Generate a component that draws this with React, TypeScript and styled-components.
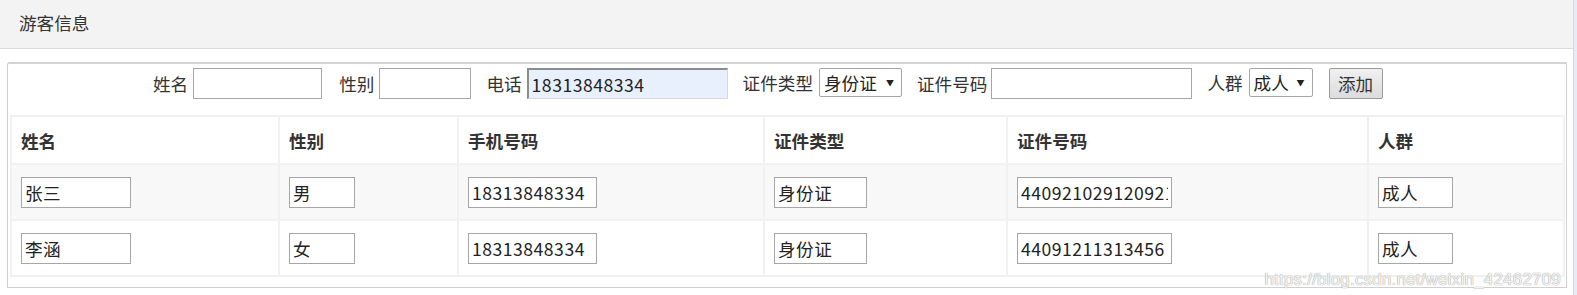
import React from 'react';
import styled, { createGlobalStyle } from 'styled-components';

const GlobalStyle = createGlobalStyle`
  html, body {
    margin: 0;
    padding: 0;
    background: #fff;
    font-family: "Noto Sans CJK SC", "Microsoft YaHei", sans-serif;
    color: #333;
  }
`

const Page = styled.div`
  display: flex;
  width: 100%;
  min-height: 295px;
`

const Main = styled.div`
  flex: 1;
  display: flex;
  flex-direction: column;
`

const ScrollStrip = styled.div`
  width: 5px;
  border-left: 1px solid #d6d9e0;
  background: #e9ecf2;
`

const Header = styled.div`
  height: 49px;
  box-sizing: border-box;
  background: #f3f3f3;
  border-bottom: 1px solid #dcdcdc;
  display: flex;
  align-items: center;
  padding: 0 0 4px 19px;
  font-size: 17.6px;
  color: #333;
`

const Panel = styled.div`
  position: relative;
  margin: 13px 6px 0 7px;
  border: 1px solid #cfcfcf;
  border-top: 2px solid #d4d4d4;
  border-radius: 3px 0 0 0;
  background: #fff;
  padding: 0 1px 10px 2px;
`

const FormRow = styled.div`
  display: flex;
  align-items: flex-start;
  height: 51px;
  padding: 4px 0 0 143px;
  box-sizing: border-box;
  gap: 15px;
`

const Field = styled.label<{ $gap?: number; $shift?: number }>`
  display: flex;
  align-items: center;
  gap: ${p => p.$gap ?? 5}px;
  margin-left: ${p => p.$shift ?? 0}px;
  font-size: 17.6px;
  color: #333;
`

const TextInput = styled.input<{ $w: number; $focus?: boolean }>`
  width: ${p => p.$w}px;
  height: 31px;
  box-sizing: border-box;
  border: 1px solid #a6a6a6;
  padding: 0 3px;
  font-family: inherit;
  font-size: 17.6px;
  letter-spacing: 0.5px;
  color: #222;
  background: ${p => (p.$focus ? '#e8f0fe' : '#fff')};
  outline: none;
  ${p => p.$focus && `
    border-top: 2px solid #8c8c8c;
    border-left: 2px solid #8c8c8c;
    border-right: 1px solid #d8d8d8;
    border-bottom: 1px solid #d8d8d8;
  `}
`

const SelectBox = styled.div<{ $w: number }>`
  position: relative;
  width: ${p => p.$w}px;
  height: 29px;
`

const Select = styled.select`
  appearance: none;
  -webkit-appearance: none;
  width: 100%;
  height: 100%;
  box-sizing: border-box;
  border: 1px solid #a6a6a6;
  border-radius: 2px;
  background: #fff;
  padding: 0 18px 0 4px;
  font-family: inherit;
  font-size: 17.6px;
  color: #222;
`

const Caret = styled.span`
  position: absolute;
  right: 8px;
  top: 9px;
  font-size: 8px;
  color: #222;
  pointer-events: none;
`

const AddButton = styled.button`
  width: 54px;
  height: 31px;
  margin-left: 1px;
  border: 1px solid #9a9a9a;
  border-radius: 2px;
  background: linear-gradient(#f0f0f0, #dcdcdc);
  font-family: inherit;
  font-size: 17.6px;
  color: #333;
  padding: 0;
`

const Table = styled.table`
  width: 1553px;
  border-collapse: collapse;
  table-layout: fixed;
`

const HeadCell = styled.th`
  height: 48px;
  box-sizing: border-box;
  border: 2px solid #f1f1f1;
  padding: 0 0 0 9px;
  text-align: left;
  font-size: 17.6px;
  font-weight: 700;
  color: #333;
`

const Row = styled.tr<{ $striped?: boolean }>`
  background: ${p => (p.$striped ? '#f8f8f8' : '#fff')};
`

const Cell = styled.td`
  height: 56px;
  box-sizing: border-box;
  border: 2px solid #f1f1f1;
  padding: 0 0 0 9px;
`

const Watermark = styled.div`
  position: absolute;
  right: 5px;
  bottom: -3px;
  font-family: "Liberation Sans", Arial, sans-serif;
  font-size: 17px;
  color: rgba(255, 255, 255, 0.9);
  text-shadow: 0 0 1px #9a9a9a, 0 0 1px #b0b0b0;
  letter-spacing: 0.2px;
  pointer-events: none;
`

type Visitor = { name: string; sex: string; phone: string; idType: string; idNo: string; crowd: string }

const visitors: Visitor[] = [
  { name: '张三', sex: '男', phone: '18313848334', idType: '身份证', idNo: '440921029120921', crowd: '成人' },
  { name: '李涵', sex: '女', phone: '18313848334', idType: '身份证', idNo: '44091211313456', crowd: '成人' },
]

const columns = [
  { title: '姓名', width: 268, input: 110, key: 'name' },
  { title: '性别', width: 179, input: 66, key: 'sex' },
  { title: '手机号码', width: 306, input: 129, key: 'phone' },
  { title: '证件类型', width: 243, input: 93, key: 'idType' },
  { title: '证件号码', width: 361, input: 155, key: 'idNo' },
  { title: '人群', width: 196, input: 75, key: 'crowd' },
] as const

function VisitorForm() {
  return (
    <FormRow>
      <Field>姓名<TextInput $w={129} /></Field>
      <Field $shift={2}>性别<TextInput $w={92} /></Field>
      <Field>电话<TextInput $w={201} $focus defaultValue="18313848334" /></Field>
      <Field $gap={6}>
        证件类型
        <SelectBox $w={83}>
          <Select defaultValue="身份证">
            <option>身份证</option>
            <option>护照</option>
          </Select>
          <Caret>▼</Caret>
        </SelectBox>
      </Field>
      <Field $gap={4} $shift={0}>证件号码<TextInput $w={201} /></Field>
      <Field $gap={6}>
        人群
        <SelectBox $w={64}>
          <Select defaultValue="成人">
            <option>成人</option>
            <option>儿童</option>
          </Select>
          <Caret>▼</Caret>
        </SelectBox>
      </Field>
      <AddButton>添加</AddButton>
    </FormRow>
  )
}

export default function App() {
  return (
    <Page>
      <GlobalStyle />
      <Main>
        <Header>游客信息</Header>
        <Panel>
          <VisitorForm />
          <Table>
            <colgroup>
              {columns.map(c => <col key={c.key} style={{ width: c.width }} />)}
            </colgroup>
            <thead>
              <tr>
                {columns.map(c => <HeadCell key={c.key}>{c.title}</HeadCell>)}
              </tr>
            </thead>
            <tbody>
              {visitors.map((v, i) => (
                <Row key={i} $striped={i % 2 === 0}>
                  {columns.map(c => (
                    <Cell key={c.key}>
                      <TextInput $w={c.input} defaultValue={v[c.key]} />
                    </Cell>
                  ))}
                </Row>
              ))}
            </tbody>
          </Table>
          <Watermark>https://blog.csdn.net/weixin_42462709</Watermark>
        </Panel>
      </Main>
      <ScrollStrip />
    </Page>
  )
}
